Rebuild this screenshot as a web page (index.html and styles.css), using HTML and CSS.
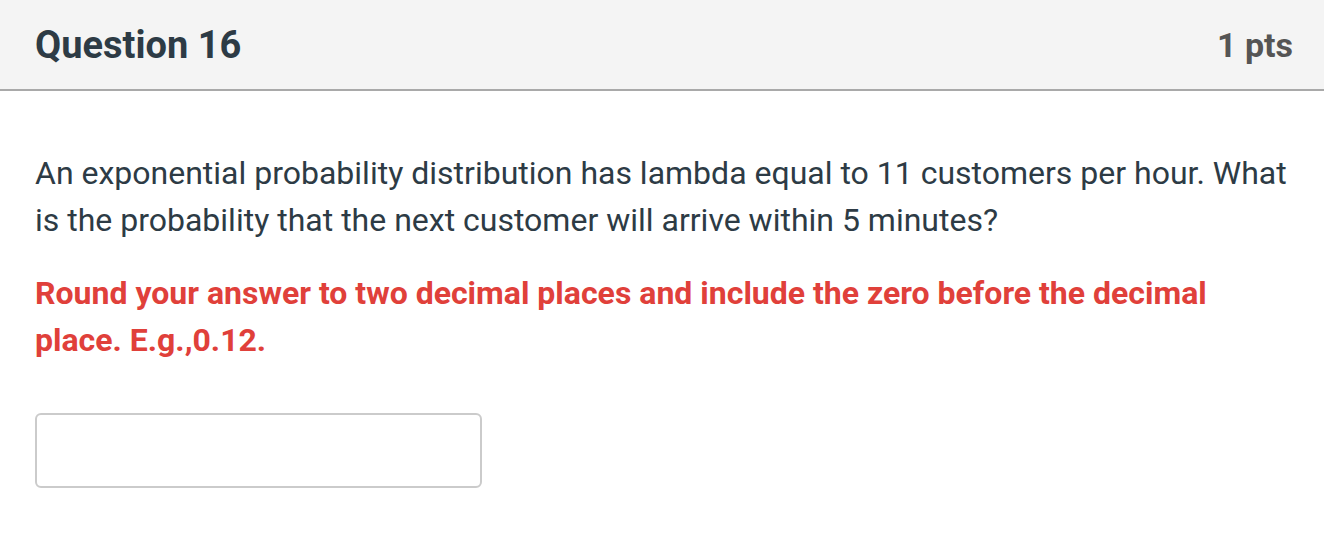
FILE: index.html
```html
<!DOCTYPE html>
<html lang="en">
<head>
<meta charset="utf-8">
<title>Question 16</title>
<link rel="stylesheet" href="styles.css">
</head>
<body>
<div class="question">
  <div class="header">
    <h2 class="title">Question 16</h2>
    <div class="points">1 pts</div>
  </div>
  <div class="content">
    <p class="text">An exponential probability distribution has lambda equal to 11 customers per hour. What is the probability that the next customer will arrive within 5 minutes?</p>
    <p class="note">Round your answer to two decimal places and include the zero before the decimal place. E.g.,0.12.</p>
    <input class="answer" type="text" aria-label="Answer">
  </div>
</div>
</body>
</html>
```

FILE: styles.css
```css
html, body {
  margin: 0;
  padding: 0;
  background: #ffffff;
}
body {
  font-family: Roboto, "Noto Sans", "Liberation Sans", sans-serif;
  color: #2d3b45;
}
.question {
  width: 1324px;
}
.header {
  display: flex;
  justify-content: space-between;
  align-items: center;
  height: 91px;
  box-sizing: border-box;
  padding: 0 31px 0 35px;
  background: #f4f4f4;
  border-bottom: 2px solid #a9a9a9;
}
.title {
  margin: 0;
  font-size: 38px;
  font-weight: 700;
  color: #2d3b45;
}
.points {
  font-size: 34px;
  font-weight: 700;
  color: #555555;
}
.content {
  padding: 59px 35px 0 35px;
}
.text {
  margin: 0;
  font-size: 32px;
  line-height: 46.5px;
}
.note {
  margin: 27px 0 0 0;
  font-size: 32px;
  line-height: 47px;
  font-weight: 700;
  color: #e0403a;
}
.answer {
  display: block;
  margin-top: 49px;
  width: 447px;
  height: 75px;
  box-sizing: border-box;
  border: 2px solid #cbcbcb;
  border-radius: 6px;
  background: #fff;
  font-family: inherit;
  font-size: 28px;
  padding: 0 12px;
}
```
